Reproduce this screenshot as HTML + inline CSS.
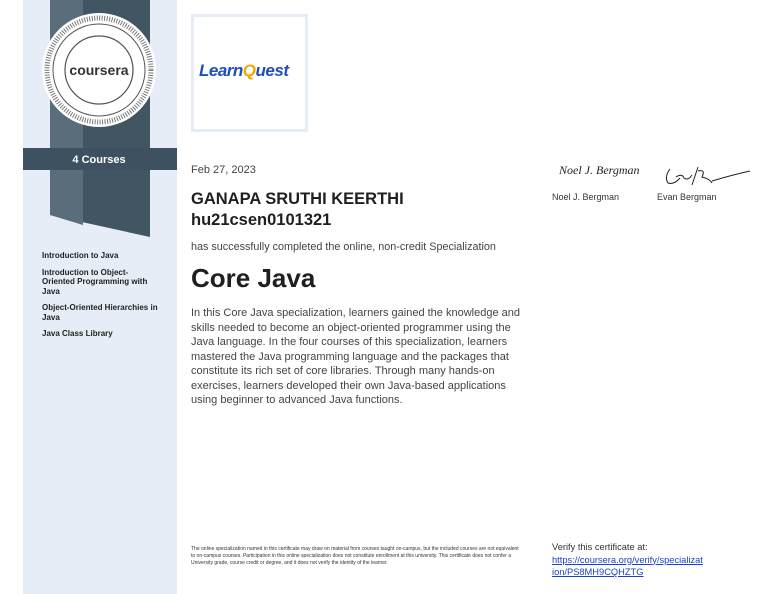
<!DOCTYPE html>
<html><head><meta charset="utf-8"><style>
*{margin:0;padding:0;box-sizing:border-box}
body{width:768px;height:594px;background:#fff;position:relative;overflow:hidden;font-family:"Liberation Sans",sans-serif;color:#1f1f1f}
.side{position:absolute;left:23px;top:0;width:154px;height:594px;background:#e6edf7}
.abs{position:absolute}
.courses li{list-style:none;font-size:8px;font-weight:bold;line-height:9.5px;margin-bottom:7px;color:#222}
</style></head><body>
<div class="side"></div>
<svg class="abs" style="left:23px;top:0" width="154" height="240">
<polygon points="27,0 127,0 127,237 27,215" fill="#415563"/>
<polygon points="27,0 60,0 60,225 27,215" fill="#5a6d7a"/>
<circle cx="76" cy="70" r="57" fill="#fff"/>
<circle cx="76" cy="70" r="52" fill="none" stroke="#777" stroke-width="5" stroke-dasharray="1 1.5"/>
<circle cx="76" cy="70" r="46" fill="none" stroke="#555" stroke-width="1"/>
<circle cx="76" cy="70" r="34" fill="none" stroke="#555" stroke-width="1.2"/>
<text x="76" y="75" text-anchor="middle" font-family="Liberation Sans" font-weight="bold" font-size="14" fill="#333">coursera</text>
<rect x="0" y="148" width="154" height="22" fill="#3e5160"/>
<text x="76" y="163" text-anchor="middle" font-family="Liberation Sans" font-weight="bold" font-size="11" fill="#fff">4 Courses</text>
</svg>
<ul class="courses abs" style="left:42px;top:251px;width:116px">
<li>Introduction to Java</li>
<li>Introduction to Object-Oriented Programming with Java</li>
<li>Object-Oriented Hierarchies in Java</li>
<li>Java Class Library</li>
</ul>
<div class="abs" style="left:191px;top:14px;width:117px;height:118px;border:3px solid #e6ecf3;background:#fff"></div>
<div class="abs" style="left:199px;top:61px;font-size:17px;font-style:italic;font-weight:bold;color:#1f4fb8;letter-spacing:-0.5px">Learn<span style="color:#f2a900">Q</span>uest</div>
<div class="abs" style="left:191px;top:164px;font-size:11px;color:#444">Feb 27, 2023</div>
<div class="abs" style="left:191px;top:189px;font-size:16.5px;font-weight:bold;line-height:21px">GANAPA SRUTHI KEERTHI<br>hu21csen0101321</div>
<div class="abs" style="left:191px;top:241px;font-size:10.8px;color:#444">has successfully completed the online, non-credit Specialization</div>
<div class="abs" style="left:191px;top:263px;font-size:26px;font-weight:bold">Core Java</div>
<div class="abs" style="left:191px;top:306px;width:340px;font-size:11px;line-height:14.5px;color:#444">In this Core Java specialization, learners gained the knowledge and skills needed to become an object-oriented programmer using the Java language. In the four courses of this specialization, learners mastered the Java programming language and the packages that constitute its rich set of core libraries. Through many hands-on exercises, learners developed their own Java-based applications using beginner to advanced Java functions.</div>
<div class="abs" style="left:559px;top:163px;font-family:'Liberation Serif',serif;font-style:italic;font-size:12px">Noel J. Bergman</div>
<svg class="abs" style="left:662px;top:163px" width="90" height="26"><path d="M8 6 Q2 14 6 20 Q12 22 18 15 M14 14 Q20 10 22 15 Q26 18 30 12 M36 4 L30 22 M36 8 Q44 6 40 14 Q48 16 50 20 M50 18 Q70 12 88 8" fill="none" stroke="#222" stroke-width="1"/></svg>
<div class="abs" style="left:552px;top:192px;font-size:9px;color:#333">Noel J. Bergman</div>
<div class="abs" style="left:657px;top:192px;font-size:9px;color:#333">Evan Bergman</div>
<div class="abs" style="left:191px;top:546px;width:332px;font-size:5px;line-height:6.8px;color:#333">The online specialization named in this certificate may draw on material from courses taught on-campus, but the included courses are not equivalent to on-campus courses. Participation in this online specialization does not constitute enrollment at this university. This certificate does not confer a University grade, course credit or degree, and it does not verify the identity of the learner.</div>
<div class="abs" style="left:552px;top:541px;width:160px;font-size:9.3px;line-height:12.5px;color:#333">Verify this certificate at:<br><span style="color:#1a3fc9;text-decoration:underline">https://coursera.org/verify/specializat ion/PS8MH9CQHZTG</span></div>
</body></html>
